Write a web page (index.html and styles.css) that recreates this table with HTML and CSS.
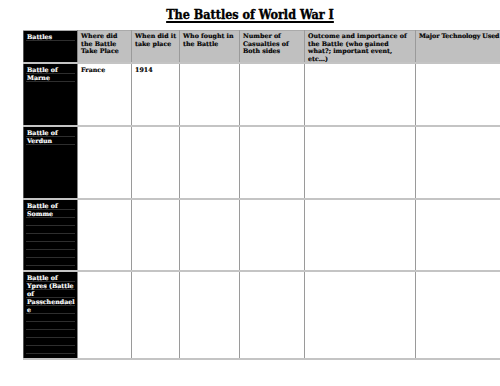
FILE: index.html
```html
<!DOCTYPE html>
<html>
<head>
<meta charset="utf-8">
<link rel="stylesheet" href="styles.css">
</head>
<body>
<h1 class="title">The Battles of World War I</h1>
<table class="grid">
  <colgroup>
    <col class="c1"><col class="c2"><col class="c3"><col class="c4"><col class="c5"><col class="c6"><col class="c7">
  </colgroup>
  <tr class="head">
    <th class="side"><div class="lines"><span>Battles</span></div></th>
    <th>Where did the Battle Take Place</th>
    <th>When did it take place</th>
    <th>Who fought in the Battle</th>
    <th>Number of Casualties of Both sides</th>
    <th>Outcome and importance of<br>the Battle (who gained<br>what?; important event,<br>etc…)</th>
    <th class="last">Major Technology Used</th>
  </tr>
  <tr class="r1">
    <td class="side"><div class="lines"><span>Battle of</span><span>Marne</span></div></td>
    <td>France</td><td>1914</td><td></td><td></td><td></td><td></td>
  </tr>
  <tr class="r2">
    <td class="side"><div class="lines"><span>Battle of</span><span>Verdun</span></div></td>
    <td></td><td></td><td></td><td></td><td></td><td></td>
  </tr>
  <tr class="r3">
    <td class="side"><div class="lines"><span>Battle of</span><span>Somme</span><span></span><span></span><span></span><span></span><span></span><span></span></div></td>
    <td></td><td></td><td></td><td></td><td></td><td></td>
  </tr>
  <tr class="r4">
    <td class="side"><div class="lines"><span>Battle of</span><span>Ypres (Battle</span><span>of</span><span>Passchendael</span><span>e</span><span></span><span></span><span></span><span></span><span></span></div></td>
    <td></td><td></td><td></td><td></td><td></td><td></td>
  </tr>
</table>
</body>
</html>
```

FILE: styles.css
```css
html, body {
  margin: 0;
  padding: 0;
  background: #fff;
  overflow: hidden;
  width: 500px;
  height: 386px;
}
body {
  font-family: "DejaVu Serif", "Liberation Serif", serif;
  color: #000;
}
.title {
  margin: 0;
  padding-top: 8px;
  height: 22px;
  box-sizing: border-box;
  text-align: center;
  font-size: 12.5px;
  line-height: 14px;
  font-weight: 900;
  font-stretch: condensed;
  text-decoration: underline;
  text-decoration-thickness: 1.5px;
  text-underline-offset: 2px;
  -webkit-text-stroke: 0.35px #000;
}
.grid {
  margin-left: 23px;
  margin-top: 8px;
  border-collapse: collapse;
  table-layout: fixed;
  width: 520px;
}
.c1 { width: 54px; }
.c2 { width: 54px; }
.c3 { width: 48px; }
.c4 { width: 60px; }
.c5 { width: 65px; }
.c6 { width: 111px; }
.c7 { width: 128px; }
.grid th, .grid td {
  vertical-align: top;
  text-align: left;
  padding: 2px 1px 2px 3px;
  font-size: 6.3px;
  line-height: 7.6px;
  font-weight: bold;
  border-left: 1px solid #9a9a9a;
  border-right: 1px solid #9a9a9a;
  border-top: 2px solid #c4c4c4;
  border-bottom: 2px solid #c4c4c4;
  overflow: hidden;
}
.grid td {
  -webkit-text-stroke: 0.15px currentColor;
}
.head th {
  background: #c0c0c0;
  height: 27px;
  padding-top: 1px;
  padding-bottom: 0;
  border-top: 1px solid #aaa;
  -webkit-text-stroke: 0.15px currentColor;
}
.head .last {
  letter-spacing: -0.1px;
  white-space: nowrap;
}
.r1 td { height: 57px; }
.r2 td { height: 67px; }
.r3 td { height: 66px; }
.r4 td { height: 82px; }
.grid .side {
  background: #000;
  color: #fff;
  padding: 2px 2px;
  border-left: 1px solid #555;
  border-right: 1px solid #888;
}
.lines {
  display: flex;
  flex-direction: column;
}
.lines span {
  display: block;
  height: 7px;
  line-height: 8px;
  padding-left: 1px;
  border-bottom: 1px solid #2e2e2e;
  white-space: nowrap;
}
```
